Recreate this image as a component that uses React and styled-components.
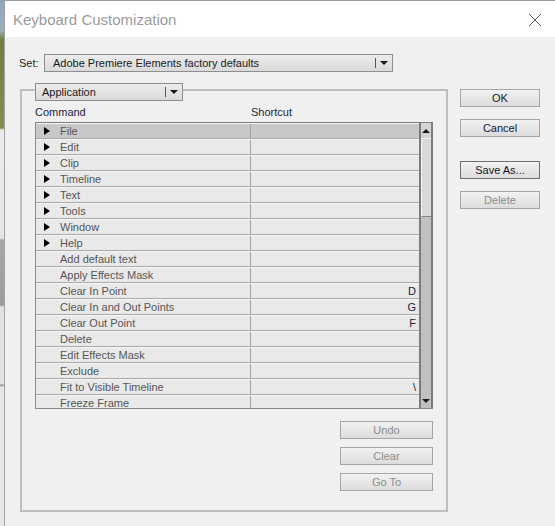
import React from "react";
import styled, { createGlobalStyle } from "styled-components";

const GlobalStyle = createGlobalStyle`
  html, body {
    margin: 0;
    padding: 0;
    background: #f0f0f0;
  }
  body {
    font-family: "Liberation Sans", Arial, sans-serif;
    font-size: 11px;
  }
`;

const Page = styled.div`
  display: flex;
  width: 555px;
  height: 526px;
  overflow: hidden;
`;

const DesktopStrip = styled.div`
  width: 4px;
  flex-shrink: 0;
  background: linear-gradient(
    to bottom,
    #8ea7c2 0px,
    #9bb0b8 30px,
    #6f7d43 40px,
    #8a8c52 128px,
    #ececec 130px,
    #e6e6e6 238px,
    #a9a9a9 240px,
    #9c9c9c 305px,
    #e2e2e2 307px,
    #e2e2e2 384px,
    #8f8f8f 385px,
    #e6e6e6 387px
  );
`;

const Window = styled.div`
  flex: 1;
  display: flex;
  flex-direction: column;
  border-left: 1px solid #a0a0a0;
  background: #f0f0f0;
`;

const TitleBar = styled.div`
  height: 36px;
  border-top: 1px solid #9a9a9a;
  background: #ffffff;
  display: flex;
  align-items: center;
  justify-content: space-between;
  padding: 0 13px 0 8px;
`;

const Title = styled.div`
  font-size: 15px;
  color: #9b9b9b;
  margin-top: 1px;
`;

const CloseButton = styled.div`
  width: 14px;
  height: 14px;
  display: flex;
  margin-top: 1px;
`;

const Body = styled.div`
  flex: 1;
  padding: 17px 0 0 14px;
`;

const SetRow = styled.div`
  display: flex;
  align-items: center;
  height: 18px;
`;

const Label = styled.span`
  width: 25px;
  color: #1e1e2e;
`;

const Select = styled.div`
  width: ${(p) => p.$width}px;
  height: 18px;
  box-sizing: border-box;
  border: 1px solid #8e8e8e;
  background: linear-gradient(to bottom, #ececec, #dadada);
  display: flex;
  align-items: center;
  color: #1a1a1a;
  margin-top: ${(p) => p.$offset || 0}px;
  position: relative;
  z-index: 1;
`;

const SelectValue = styled.span`
  flex: 1;
  padding-left: ${(p) => p.$pad}px;
  white-space: nowrap;
  margin-top: -1px;
`;

const SelectArrow = styled.span`
  width: 17px;
  height: 100%;
  display: flex;
  align-items: center;
  justify-content: center;
  position: relative;

  &:before {
    content: "";
    position: absolute;
    left: 0;
    top: 3px;
    height: 10px;
    border-left: 1px solid #555;
  }
`;

const Triangle = styled.span`
  width: 0;
  height: 0;
  display: inline-block;
  ${(p) =>
    p.$dir === "right"
      ? `border-left: 6px solid #000; border-top: 4px solid transparent; border-bottom: 4px solid transparent;`
      : p.$dir === "up"
      ? `border-bottom: 4px solid #1a1a1a; border-left: 4px solid transparent; border-right: 4px solid transparent;`
      : `border-top: 4px solid #1a1a1a; border-left: 4px solid transparent; border-right: 4px solid transparent;`}
`;

const Main = styled.div`
  display: flex;
  align-items: flex-start;
  margin-top: 17px;
`;

const GroupBox = styled.div`
  width: 428px;
  height: 423px;
  box-sizing: border-box;
  margin-left: 1px;
  border: 2px solid #bdbdbd;
  padding: 0 13px;
  display: flex;
  flex-direction: column;
`;

const Headers = styled.div`
  display: flex;
  height: 21px;
  padding-top: 5px;
  box-sizing: border-box;
  color: #1e1e34;
`;

const HeaderCell = styled.span`
  width: ${(p) => (p.$width ? `${p.$width}px` : "auto")};
`;

const Table = styled.div`
  height: 287px;
  box-sizing: border-box;
  display: flex;
  border-top: 1px solid #7c7c7c;
  border-left: 1px solid #8a8a8a;
  border-bottom: 1px solid #8a8a8a;
`;

const Rows = styled.div`
  flex: 1;
  overflow: hidden;
`;

const Row = styled.div`
  display: flex;
  height: 16px;
  box-sizing: border-box;
  border-top: 1px solid #f6f6f6;
  border-bottom: 1px solid #a9a9a9;
  background: ${(p) => (p.$selected ? "#c8c8c8" : "#e9e9e9")};
`;

const CommandCell = styled.div`
  width: 215px;
  border-right: 1px solid #a3a3a3;
  display: flex;
  align-items: center;
  padding-left: 8px;
  box-sizing: border-box;
  color: #565656;
  white-space: nowrap;
`;

const Expander = styled.span`
  width: 16px;
  display: flex;
  align-items: center;
`;

const ShortcutCell = styled.div`
  flex: 1;
  display: flex;
  align-items: center;
  justify-content: flex-end;
  padding-right: 3px;
  color: #1c1c40;
`;

const Scrollbar = styled.div`
  width: 14px;
  box-sizing: border-box;
  border-left: 2px solid #7c7c7c;
  border-right: 2px solid #7c7c7c;
  background: #c0c0c0;
  display: flex;
  flex-direction: column;
`;

const ScrollButton = styled.div`
  height: 15px;
  display: flex;
  align-items: center;
  justify-content: center;
  background: ${(p) => (p.$light ? "#d4d4d4" : "transparent")};
  margin-top: ${(p) => (p.$bottom ? "auto" : "0")};
`;

const Thumb = styled.div`
  height: 79px;
  box-sizing: border-box;
  background: #d9d9d9;
  border-top: 1px solid #f4f4f4;
  border-left: 1px solid #f4f4f4;
  border-bottom: 1px solid #858585;
`;

const ActionColumn = styled.div`
  display: flex;
  flex-direction: column;
  align-items: flex-end;
  gap: 8px;
  margin-top: 12px;
`;

const ButtonColumn = styled.div`
  display: flex;
  flex-direction: column;
  margin-left: 12px;
`;

const Button = styled.div`
  width: ${(p) => p.$width || 80}px;
  height: 18px;
  box-sizing: border-box;
  border: 1px solid ${(p) => (p.$default ? "#6e6e6e" : "#a5a5a5")};
  background: linear-gradient(to bottom, #f2f2f2, #dcdcdc);
  display: flex;
  align-items: center;
  justify-content: center;
  padding-bottom: 1px;
  color: ${(p) => (p.$disabled ? "#8c8c8c" : "#16162a")};
  margin-top: ${(p) => p.$gap || 0}px;
`;

const rows = [
  { name: "File", group: true, selected: true },
  { name: "Edit", group: true },
  { name: "Clip", group: true },
  { name: "Timeline", group: true },
  { name: "Text", group: true },
  { name: "Tools", group: true },
  { name: "Window", group: true },
  { name: "Help", group: true },
  { name: "Add default text" },
  { name: "Apply Effects Mask" },
  { name: "Clear In Point", key: "D" },
  { name: "Clear In and Out Points", key: "G" },
  { name: "Clear Out Point", key: "F" },
  { name: "Delete" },
  { name: "Edit Effects Mask" },
  { name: "Exclude" },
  { name: "Fit to Visible Timeline", key: "\\" },
  { name: "Freeze Frame" },
];

const App = () => {
  return (
    <>
      <GlobalStyle />
      <Page>
        <DesktopStrip />
        <Window>
          <TitleBar>
            <Title>Keyboard Customization</Title>
            <CloseButton>
              <svg width="14" height="14" viewBox="0 0 14 14">
                <path d="M1 1 L13 13 M13 1 L1 13" stroke="#5a5a5a" strokeWidth="1" fill="none" />
              </svg>
            </CloseButton>
          </TitleBar>
          <Body>
            <SetRow>
              <Label>Set:</Label>
              <Select $width={349}>
                <SelectValue $pad={8}>Adobe Premiere Elements factory defaults</SelectValue>
                <SelectArrow>
                  <Triangle $dir="down" />
                </SelectArrow>
              </Select>
            </SetRow>
            <Main>
              <GroupBox>
                <Select $width={148} $offset={-8}>
                  <SelectValue $pad={6}>Application</SelectValue>
                  <SelectArrow>
                    <Triangle $dir="down" />
                  </SelectArrow>
                </Select>
                <Headers>
                  <HeaderCell $width={216}>Command</HeaderCell>
                  <HeaderCell>Shortcut</HeaderCell>
                </Headers>
                <Table>
                  <Rows>
                    {rows.map((r) => (
                      <Row key={r.name} $selected={r.selected}>
                        <CommandCell>
                          <Expander>{r.group && <Triangle $dir="right" />}</Expander>
                          {r.name}
                        </CommandCell>
                        <ShortcutCell>{r.key}</ShortcutCell>
                      </Row>
                    ))}
                  </Rows>
                  <Scrollbar>
                    <ScrollButton $light>
                      <Triangle $dir="up" />
                    </ScrollButton>
                    <Thumb />
                    <ScrollButton $bottom>
                      <Triangle $dir="down" />
                    </ScrollButton>
                  </Scrollbar>
                </Table>
                <ActionColumn>
                  <Button $width={93} $disabled>Undo</Button>
                  <Button $width={93} $disabled>Clear</Button>
                  <Button $width={93} $disabled>Go To</Button>
                </ActionColumn>
              </GroupBox>
              <ButtonColumn>
                <Button>OK</Button>
                <Button $gap={12}>Cancel</Button>
                <Button $gap={24} $default>Save As...</Button>
                <Button $gap={12} $disabled>Delete</Button>
              </ButtonColumn>
            </Main>
          </Body>
        </Window>
      </Page>
    </>
  );
};

export default App;
